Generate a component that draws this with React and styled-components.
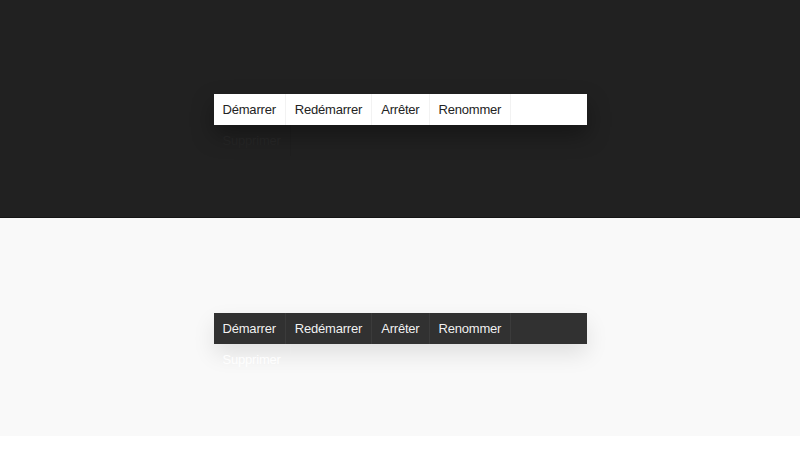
import React from "react";
import styled, { createGlobalStyle } from "styled-components";

const GlobalStyle = createGlobalStyle`
    html, body {
        margin: 0;
        padding: 0;
        background: #fff;
        font-family: "Liberation Sans", Arial, sans-serif;
    }
`;

const Section = styled.section`
    height: 218px;
    padding-top: ${(p) => (p.$dark ? "1px" : "3px")};
    box-sizing: border-box;
    display: flex;
    align-items: center;
    justify-content: center;
    background: ${(p) => (p.$dark ? "#212121" : "#f9f9f9")};
    box-shadow: ${(p) => (p.$dark ? "inset 0 -1px 0 #151515" : "none")};
`;

const Bar = styled.nav`
    width: 373px;
    height: 31px;
    display: flex;
    flex-wrap: wrap;
    background: ${(p) => (p.$dark ? "#313131" : "#fff")};
    box-shadow: 0 10px 22px rgba(0, 0, 0, ${(p) => (p.$dark ? 0.1 : 0.35)});
`;

const Item = styled.a`
    display: block;
    height: 31px;
    line-height: 31px;
    padding: 0 9px;
    font-size: 13px;
    letter-spacing: -0.2px;
    color: ${(p) => (p.$dark ? "rgba(255, 255, 255, 0.95)" : "#232323")};
    border-right: 1px solid
        ${(p) => (p.$dark ? "rgba(255, 255, 255, 0.05)" : "rgba(0, 0, 0, 0.05)")};
    text-decoration: none;
    cursor: pointer;
    white-space: nowrap;
`;

const items = ["Démarrer", "Redémarrer", "Arrêter", "Renommer", "Supprimer"];

const Menu = ({ dark }) => (
    <Bar $dark={dark}>
        {items.map((label) => (
            <Item key={label} $dark={dark}>
                {label}
            </Item>
        ))}
    </Bar>
);

export default function App() {
    return (
        <>
            <GlobalStyle />
            <Section $dark>
                <Menu />
            </Section>
            <Section>
                <Menu dark />
            </Section>
        </>
    );
}
